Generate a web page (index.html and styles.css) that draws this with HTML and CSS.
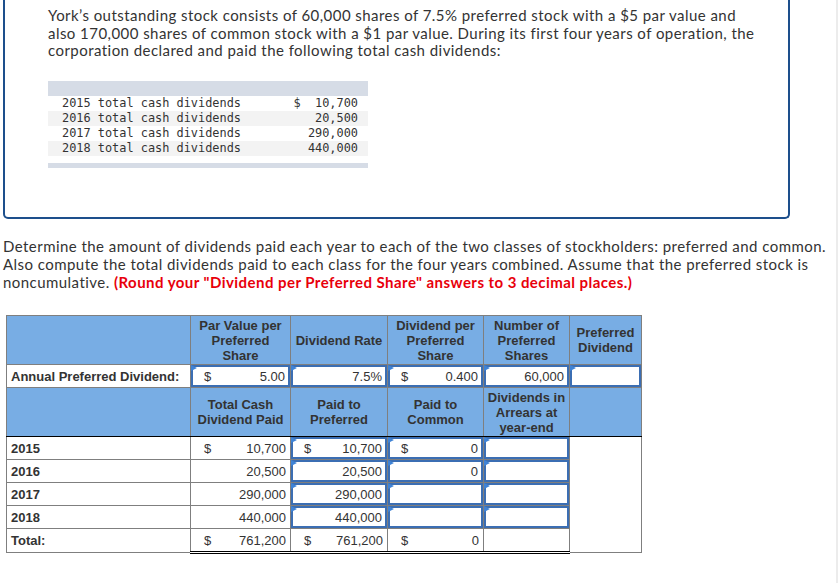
FILE: index.html
```html
<!DOCTYPE html>
<html>
<head>
<meta charset="utf-8">
<link rel="stylesheet" href="styles.css">
</head>
<body>
<div class="page">
  <div class="problem">
    <p class="intro">York’s outstanding stock consists of 60,000 shares of 7.5% preferred stock with a $5 par value and also 170,000 shares of common stock with a $1 par value. During its first four years of operation, the corporation declared and paid the following total cash dividends:</p>
    <div class="ledger">
      <div class="band"></div>
      <div class="lrow"><span>2015 total cash dividends</span><span>$  10,700</span></div>
      <div class="lrow alt"><span>2016 total cash dividends</span><span>20,500</span></div>
      <div class="lrow"><span>2017 total cash dividends</span><span>290,000</span></div>
      <div class="lrow alt"><span>2018 total cash dividends</span><span>440,000</span></div>
      <div class="lgap"></div>
      <div class="band thin"></div>
    </div>
  </div>
  <p class="task"><span>Determine the amount of dividends paid each year to each of the two classes of stockholders: preferred and common.</span><br><span>Also compute the total dividends paid to each class for the four years combined. Assume that the preferred stock is</span><br><span>noncumulative.</span> <strong class="hint">(Round your "Dividend per Preferred Share" answers to 3 decimal places.)</strong></p>

  <table class="grid">
    <colgroup>
      <col class="c1"><col class="c2"><col class="c3"><col class="c4"><col class="c5"><col class="c6">
    </colgroup>
    <tr class="head">
      <th></th>
      <th>Par Value per<br>Preferred<br>Share</th>
      <th>Dividend Rate</th>
      <th>Dividend per<br>Preferred<br>Share</th>
      <th>Number of<br>Preferred<br>Shares</th>
      <th>Preferred<br>Dividend</th>
    </tr>
    <tr class="row">
      <td class="label">Annual Preferred Dividend:</td>
      <td class="in"><div class="box"><span>$</span><span>5.00</span></div></td>
      <td class="in"><div class="box"><span></span><span>7.5%</span></div></td>
      <td class="in"><div class="box"><span>$</span><span>0.400</span></div></td>
      <td class="in"><div class="box"><span></span><span>60,000</span></div></td>
      <td class="in"><div class="box"><span></span><span></span></div></td>
    </tr>
    <tr class="head head2">
      <th></th>
      <th>Total Cash<br>Dividend Paid</th>
      <th>Paid to<br>Preferred</th>
      <th>Paid to<br>Common</th>
      <th>Dividends in<br>Arrears at<br>year-end</th>
      <th></th>
    </tr>
    <tr class="row">
      <td class="label">2015</td>
      <td class="amt"><div class="cell"><span>$</span><span>10,700</span></div></td>
      <td class="in"><div class="box"><span>$</span><span>10,700</span></div></td>
      <td class="in"><div class="box"><span>$</span><span>0</span></div></td>
      <td class="in"><div class="box"><span></span><span></span></div></td>
      <td class="blank" rowspan="5"></td>
    </tr>
    <tr class="row">
      <td class="label">2016</td>
      <td class="amt"><div class="cell"><span></span><span>20,500</span></div></td>
      <td class="in"><div class="box"><span></span><span>20,500</span></div></td>
      <td class="in"><div class="box"><span></span><span>0</span></div></td>
      <td class="in"><div class="box"><span></span><span></span></div></td>
    </tr>
    <tr class="row">
      <td class="label">2017</td>
      <td class="amt"><div class="cell"><span></span><span>290,000</span></div></td>
      <td class="in"><div class="box"><span></span><span>290,000</span></div></td>
      <td class="in"><div class="box"><span></span><span></span></div></td>
      <td class="in"><div class="box"><span></span><span></span></div></td>
    </tr>
    <tr class="row">
      <td class="label">2018</td>
      <td class="amt"><div class="cell"><span></span><span>440,000</span></div></td>
      <td class="in"><div class="box"><span></span><span>440,000</span></div></td>
      <td class="in"><div class="box"><span></span><span></span></div></td>
      <td class="in"><div class="box"><span></span><span></span></div></td>
    </tr>
    <tr class="row total">
      <td class="label plain">Total:</td>
      <td class="amt tot"><div class="cell"><span>$</span><span>761,200</span></div></td>
      <td class="amt tot"><div class="cell"><span>$</span><span>761,200</span></div></td>
      <td class="amt tot"><div class="cell"><span>$</span><span>0</span></div></td>
      <td class="amt tot"><div class="cell"><span></span><span></span></div></td>
    </tr>
  </table>
</div>
</body>
</html>
```

FILE: styles.css
```css
html, body {
  margin: 0;
  padding: 0;
  background: #ffffff;
}

.page {
  width: 836px;
  min-height: 583px;
  border-right: 2px solid #ececec;
  font-family: "Lato", "Open Sans", sans-serif;
  color: #333333;
}

.problem {
  margin-left: 3px;
  width: 787px;
  height: 219px;
  box-sizing: border-box;
  border: 2px solid #1d4f8c;
  border-top: none;
  border-radius: 0 0 5px 5px;
  padding: 7px 28px 0 43px;
}

.intro {
  margin: 0;
  font-size: 15px;
  letter-spacing: 0.45px;
  line-height: 17.6px;
}

.ledger {
  margin-top: 21px;
  width: 320px;
  font-family: "DejaVu Sans Mono", "Liberation Mono", monospace;
  font-size: 11.9px;
  color: #333333;
}

.band {
  height: 15px;
  background: #d6dce6;
}

.band.thin {
  height: 5px;
}

.lrow {
  height: 15px;
  line-height: 15px;
  display: flex;
  justify-content: space-between;
  padding: 0 10px 0 14px;
  white-space: pre;
}

.lrow.alt {
  background: #f3f3f3;
}

.lgap {
  height: 7px;
}

.task {
  margin: 18px 0 0 3px;
  font-size: 15px;
  letter-spacing: 0.45px;
  line-height: 18px;
}

.hint {
  color: #e8000b;
  font-weight: 700;
}

.grid {
  margin: 24px 0 0 6px;
  border-collapse: collapse;
  table-layout: fixed;
  font-family: "Liberation Sans", Arial, sans-serif;
  font-size: 13px;
  color: #333333;
}

.c1 { width: 184px; }
.c2 { width: 100px; }
.c3 { width: 97px; }
.c4 { width: 96px; }
.c5 { width: 86px; }
.c6 { width: 72px; }

.head th {
  height: 48px;
  background: #78ade4;
  border: 1px solid #7f7f7f;
  font-weight: 700;
  line-height: 15px;
  padding: 0 2px;
  text-align: center;
  vertical-align: middle;
  color: #333333;
}

.head2 th {
  border-top: 1px solid #000000;
  border-bottom: 1px solid #000000;
}

.row td {
  height: 22px;
  padding: 0;
  border: 1px solid #7f7f7f;
  vertical-align: middle;
}

.label {
  font-weight: 700;
  padding: 0 0 0 4px !important;
}

.label.plain {
  font-weight: 700;
}

.box,
.cell {
  height: 22px;
  box-sizing: border-box;
  display: flex;
  align-items: center;
  justify-content: space-between;
  padding: 0 3px 0 11px;
  background: #ffffff;
}

.box {
  position: relative;
  border: 2px solid #3b6eb3;
}

.box::before {
  content: "";
  position: absolute;
  left: -2px;
  top: -2px;
  border-left: 6px solid #3f83d6;
  border-top: 3.5px solid transparent;
  border-bottom: 3.5px solid transparent;
}

.cell {
  padding: 0 4px 0 13px;
}

.tot {
  border-top: 1px solid #000000 !important;
  border-bottom: 3px double #000000 !important;
}

.blank {
  background: #ffffff;
}
```
